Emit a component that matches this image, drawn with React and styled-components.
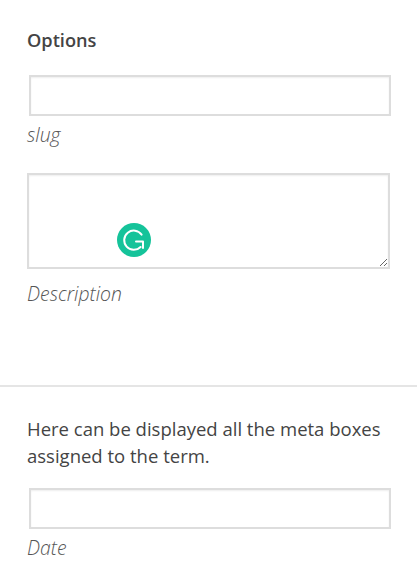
import React from 'react';
import styled, { createGlobalStyle } from 'styled-components';

const GlobalStyle = createGlobalStyle`
  html, body {
    margin: 0;
    background: #fff;
  }
`;

const Page = styled.div`
  width: 417px;
  height: 577px;
  overflow: hidden;
  font-family: 'Open Sans', 'Noto Sans', sans-serif;
  color: #444;
`;

const Section = styled.section`
  padding: ${(p) => p.$padding};
  border-bottom: ${(p) => (p.$divided ? '2px solid #e5e5e5' : 'none')};
`;

const Title = styled.h2`
  margin: 0 0 23px;
  font-size: 18.2px;
  line-height: 24px;
  font-weight: 600;
  color: #444;
`;

const Field = styled.div`
  margin-bottom: ${(p) => p.$gap || 0}px;
`;

const TextInput = styled.input`
  display: block;
  box-sizing: border-box;
  width: 362px;
  height: 41px;
  margin-left: 2px;
  padding: 0 8px;
  background: #fff;
  border: 2px solid #ddd;
  border-radius: 0;
  box-shadow: inset 0 1px 2px rgba(0, 0, 0, 0.07);
  outline: none;
`;

const AreaWrap = styled.div`
  position: relative;
  width: 363px;
`;

const TextArea = styled.textarea`
  display: block;
  box-sizing: border-box;
  width: 363px;
  height: 96px;
  margin: 0;
  padding: 8px;
  background: #fff;
  border: 2px solid #ddd;
  border-radius: 0;
  box-shadow: inset 0 1px 2px rgba(0, 0, 0, 0.07);
  outline: none;
`;

const Badge = styled.svg`
  position: absolute;
  left: 90px;
  top: 50px;
  width: 34px;
  height: 34px;
`;

const Hint = styled.p`
  margin: ${(p) => p.$top || 7}px 0 0;
  font-size: 19.4px;
  line-height: 24px;
  font-style: italic;
  font-weight: 300;
  color: #555;
`;

const Text = styled.p`
  margin: 0 0 19px;
  font-size: 18.5px;
  line-height: 27px;
  color: #444;
`;

const GrammarlyBadge = () => (
  <Badge viewBox="0 0 34 34" aria-hidden="true">
    <circle cx="17" cy="17" r="17" fill="#15c39a" />
    <path
      d="M24.6 11.6 A9.6 9.6 0 1 0 23.6 24"
      fill="none"
      stroke="#fff"
      strokeWidth="2"
      strokeLinecap="round"
    />
    <path
      d="M19 18.4 H26 V25"
      fill="none"
      stroke="#fff"
      strokeWidth="2"
      strokeLinecap="round"
      strokeLinejoin="round"
    />
  </Badge>
);

export default function App() {
  return (
    <Page>
      <GlobalStyle />
      <Section $divided $padding="28px 27px 79px">
        <Title>Options</Title>
        <Field $gap={26}>
          <TextInput type="text" />
          <Hint>slug</Hint>
        </Field>
        <Field>
          <AreaWrap>
            <TextArea />
            <GrammarlyBadge />
          </AreaWrap>
          <Hint $top={13}>Description</Hint>
        </Field>
      </Section>
      <Section $padding="28px 27px 0">
        <Text>
          Here can be displayed all the meta boxes assigned to the term.
        </Text>
        <Field>
          <TextInput type="text" />
          <Hint>Date</Hint>
        </Field>
      </Section>
    </Page>
  );
}
